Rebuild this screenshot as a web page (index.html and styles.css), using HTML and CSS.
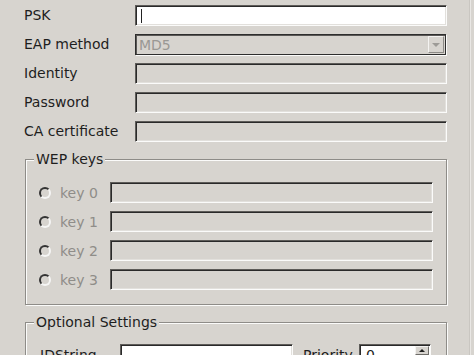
FILE: index.html
```html
<!DOCTYPE html>
<html>
<head>
<meta charset="utf-8">
<link rel="stylesheet" href="styles.css">
</head>
<body>
<div class="page">
  <div class="form">
    <div class="row"><span class="label">PSK</span><div class="field edit"><span class="cursor"></span></div></div>
    <div class="row"><span class="label">EAP method</span><div class="combo"><span class="combo-text">MD5</span><span class="combo-btn"><span class="arrow-down"></span></span></div></div>
    <div class="row"><span class="label">Identity</span><div class="field"></div></div>
    <div class="row"><span class="label">Password</span><div class="field"></div></div>
    <div class="row"><span class="label">CA certificate</span><div class="field"></div></div>
  </div>

  <div class="group wep">
    <span class="gtitle">WEP keys</span>
    <div class="keyrow"><span class="radio"></span><span class="keylabel">key 0</span><div class="field key"></div></div>
    <div class="keyrow"><span class="radio"></span><span class="keylabel">key 1</span><div class="field key"></div></div>
    <div class="keyrow"><span class="radio"></span><span class="keylabel">key 2</span><div class="field key"></div></div>
    <div class="keyrow"><span class="radio"></span><span class="keylabel">key 3</span><div class="field key"></div></div>
  </div>

  <div class="group opt">
    <span class="gtitle">Optional Settings</span>
    <div class="optrow">
      <span class="optlabel">IDString</span>
      <div class="field edit idfield"></div>
      <span class="prlabel">Priority</span>
      <div class="spin"><span class="spin-text">0</span><span class="spin-btns"><span class="spin-up"><span class="arrow-up"></span></span></span></div>
    </div>
  </div>
</div>
<div class="edge"></div>
</body>
</html>
```

FILE: styles.css
```css
html, body {
  margin: 0;
  padding: 0;
  background: #d7d4cf;
  width: 474px;
  height: 355px;
  overflow: hidden;
  font-family: "DejaVu Sans", "Liberation Sans", sans-serif;
  font-size: 14px;
  color: #1e1e1e;
}

.page {
  display: flex;
  flex-direction: column;
  padding: 5px 0 0 24px;
  width: 450px;
  box-sizing: border-box;
}

.form {
  display: flex;
  flex-direction: column;
  gap: 8px;
}

.row {
  display: flex;
  align-items: center;
  height: 21px;
}

.label {
  width: 111px;
  flex: none;
  line-height: 16px;
  margin-top: -1px;
}

.field {
  box-sizing: border-box;
  height: 21px;
  width: 312px;
  flex: none;
  border: 1px solid;
  border-color: #5e5c59 #fbfbfa #fbfbfa #5e5c59;
  box-shadow: inset 1px 1px 0 #2a2a2a, inset -1px -1px 0 #e2e0dc;
  background: #d7d4cf;
  position: relative;
}

.field.edit {
  background: #ffffff;
}

.cursor {
  position: absolute;
  left: 5px;
  top: 3px;
  width: 1px;
  height: 14px;
  background: #222;
}

.combo {
  box-sizing: border-box;
  height: 21px;
  width: 311px;
  flex: none;
  border: 1px solid #2e2e2e;
  box-shadow: inset 1px 1px 0 #5a5856, 1px 1px 0 #fbfbfa;
  background: #d7d4cf;
  display: flex;
  align-items: center;
  justify-content: space-between;
  padding: 0 1px 0 3px;
}

.combo-text {
  color: #9a9894;
  font-size: 14px;
  line-height: 16px;
}

.combo-btn {
  box-sizing: border-box;
  width: 16px;
  height: 17px;
  border: 1px solid;
  border-color: #f4f3f1 #8c8a86 #8c8a86 #f4f3f1;
  background: #d7d4cf;
  display: flex;
  align-items: center;
  justify-content: center;
}

.arrow-down {
  width: 0;
  height: 0;
  border-left: 4px solid transparent;
  border-right: 4px solid transparent;
  border-top: 4px solid #9d9b97;
}

.group {
  position: relative;
  box-sizing: border-box;
  width: 422px;
  margin-left: 1px;
  border: 1px solid #8e8c88;
  box-shadow: inset 1px 1px 0 #fbfbfa, 1px 1px 0 #fbfbfa;
}

.gtitle {
  position: absolute;
  top: -9px;
  left: 8px;
  padding: 0 2px;
  background: #d7d4cf;
  line-height: 16px;
}

.wep {
  margin-top: 17px;
  height: 146px;
  padding: 22px 14px 0 13px;
  display: flex;
  flex-direction: column;
  gap: 8px;
}

.keyrow {
  display: flex;
  align-items: center;
  height: 21px;
}

.radio {
  box-sizing: border-box;
  width: 12px;
  height: 12px;
  border-radius: 50%;
  border: 2px solid;
  border-color: #333333 #f6f6f5 #f6f6f5 #333333;
  flex: none;
  margin-right: 9px;
  margin-top: 1px;
}

.keylabel {
  width: 50px;
  flex: none;
  color: #8f8d89;
  line-height: 16px;
}

.field.key {
  width: 323px;
}

.opt {
  margin-top: 17px;
  height: 60px;
  padding: 21px 14px 0 14px;
}

.optrow {
  display: flex;
  align-items: flex-start;
  height: 21px;
}

.optlabel {
  width: 80px;
  flex: none;
  line-height: 16px;
  margin-top: 3px;
}

.idfield {
  width: 173px;
}

.prlabel {
  width: 56px;
  flex: none;
  margin-left: 10px;
  line-height: 16px;
  margin-top: 3px;
}

.spin {
  box-sizing: border-box;
  width: 72px;
  height: 21px;
  flex: none;
  border: 1px solid;
  border-color: #5e5c59 #fbfbfa #fbfbfa #5e5c59;
  box-shadow: inset 1px 1px 0 #2a2a2a;
  background: #fff;
  display: flex;
  justify-content: space-between;
  padding: 1px 1px 0 6px;
}

.spin-text {
  line-height: 16px;
  margin-top: 1px;
}

.spin-btns {
  width: 14px;
  display: flex;
  flex-direction: column;
}

.spin-up {
  box-sizing: border-box;
  height: 9px;
  border: 1px solid;
  border-color: #f4f3f1 #6e6c68 #6e6c68 #f4f3f1;
  background: #d7d4cf;
  display: flex;
  align-items: center;
  justify-content: center;
}

.arrow-up {
  width: 0;
  height: 0;
  border-left: 3px solid transparent;
  border-right: 3px solid transparent;
  border-bottom: 3px solid #1e1e1e;
}

.edge {
  position: absolute;
  top: 0;
  left: 469px;
  width: 1px;
  height: 355px;
  background: #c9c6c1;
  box-shadow: 1px 0 0 #e9e7e4;
}
```
